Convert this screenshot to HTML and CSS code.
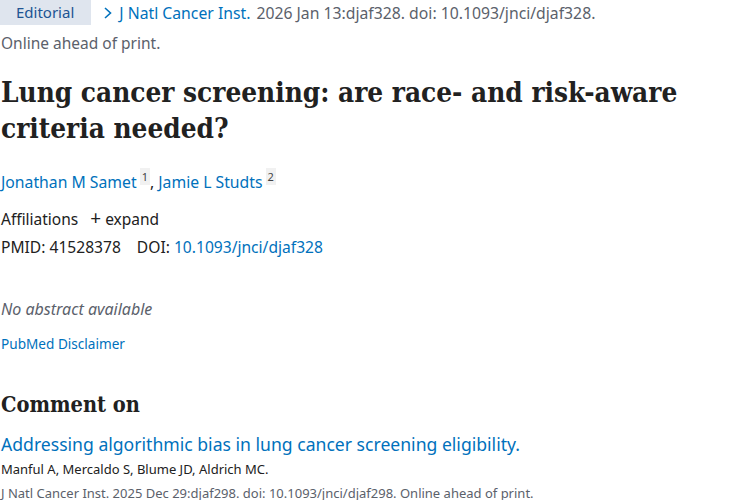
FILE: index.html
```html
<!DOCTYPE html>
<html>
<head>
<meta charset="utf-8">
<link rel="stylesheet" href="styles.css">
</head>
<body>
<main class="article">
  <div class="cite-row">
    <span class="badge">Editorial</span>
    <span class="cite">
      <svg class="chev" width="10" height="14" viewBox="0 0 10 14"><path d="M2 2 L7.5 7 L2 12" fill="none" stroke="#0071bc" stroke-width="1.6"/></svg>
      <a class="journal">J Natl Cancer Inst.</a> 2026 Jan 13:djaf328. doi: 10.1093/jnci/djaf328.
    </span>
  </div>
  <div class="status">Online ahead of print.</div>
  <h1 class="title">Lung cancer screening: are race- and risk-aware criteria needed?</h1>
  <div class="authors">
    <a class="author">Jonathan M Samet</a><sup class="aff">1</sup>, <a class="author">Jamie L Studts</a><sup class="aff">2</sup>
  </div>
  <div class="affiliations">Affiliations <span class="expand"><span class="plus">+</span> expand</span></div>
  <div class="ids"><span class="pmid">PMID: 41528378</span><span class="doi">DOI: <a class="link">10.1093/jnci/djaf328</a></span></div>
  <p class="noabs">No abstract available</p>
  <a class="disclaimer">PubMed Disclaimer</a>
  <h2 class="comment-h">Comment on</h2>
  <a class="comment-title">Addressing algorithmic bias in lung cancer screening eligibility.</a>
  <div class="comment-authors">Manful A, Mercaldo S, Blume JD, Aldrich MC.</div>
  <div class="comment-cite">J Natl Cancer Inst. 2025 Dec 29:djaf298. doi: 10.1093/jnci/djaf298. Online ahead of print.</div>
</main>
</body>
</html>
```
FILE: styles.css
```css
html, body { margin: 0; padding: 0; background: #fff; overflow: hidden; }
body { font-family: "Noto Sans", "Open Sans", sans-serif; color: #212121; }
.article { padding: 0 0 0 1px; display: flex; flex-direction: column; align-items: flex-start; }
a { color: #0071bc; text-decoration: none; }
.cite-row { display: flex; align-items: center; height: 25px; font-size: 15.75px; }
.badge { background: #dfe5ee; color: #205493; height: 25px; line-height: 25px; padding: 0 17px 0 16px; margin-left: -1px; font-size: 15px; }
.cite { color: #5b616b; margin-left: 12px; display: flex; align-items: center; gap: 6px; white-space: nowrap; }
.journal { color: #0071bc; }
.status { font-size: 15.5px; color: #5b616b; margin-top: 8px; line-height: 20px; }
.title { font-family: "DejaVu Serif Condensed", "DejaVu Serif", serif; font-stretch: condensed; font-weight: bold; font-size: 27.7px; line-height: 36px; margin: 22px 0 0; color: #212121; max-width: 700px; }
.authors { font-size: 15.75px; margin-top: 24px; line-height: 22px; }
.aff { font-size: 11px; line-height: 0; background: #f1f1f1; color: #444; padding: 1px 2px; margin-left: 3px; vertical-align: 7px; }
.affiliations { font-size: 15.5px; margin-top: 15px; line-height: 22px; }
.expand { margin-left: 8px; }
.plus { font-size: 19px; line-height: 0; }
.ids { font-size: 15.6px; margin-top: 6px; line-height: 22px; display: flex; gap: 16px; }
.noabs { font-style: italic; color: #5b616b; font-size: 16px; margin: 40px 0 0; line-height: 22px; }
.disclaimer { font-size: 13.6px; margin-top: 15px; line-height: 18px; }
.comment-h { font-family: "DejaVu Serif Condensed", "DejaVu Serif", serif; font-stretch: condensed; font-weight: bold; font-size: 21.6px; margin: 38px 0 0; line-height: 28px; }
.comment-title { font-size: 17.6px; margin-top: 13px; line-height: 24px; }
.comment-authors { font-size: 13px; margin-top: 3px; line-height: 20px; }
.comment-cite { font-size: 13px; color: #5b616b; margin-top: 4px; line-height: 20px; white-space: nowrap; }
```
